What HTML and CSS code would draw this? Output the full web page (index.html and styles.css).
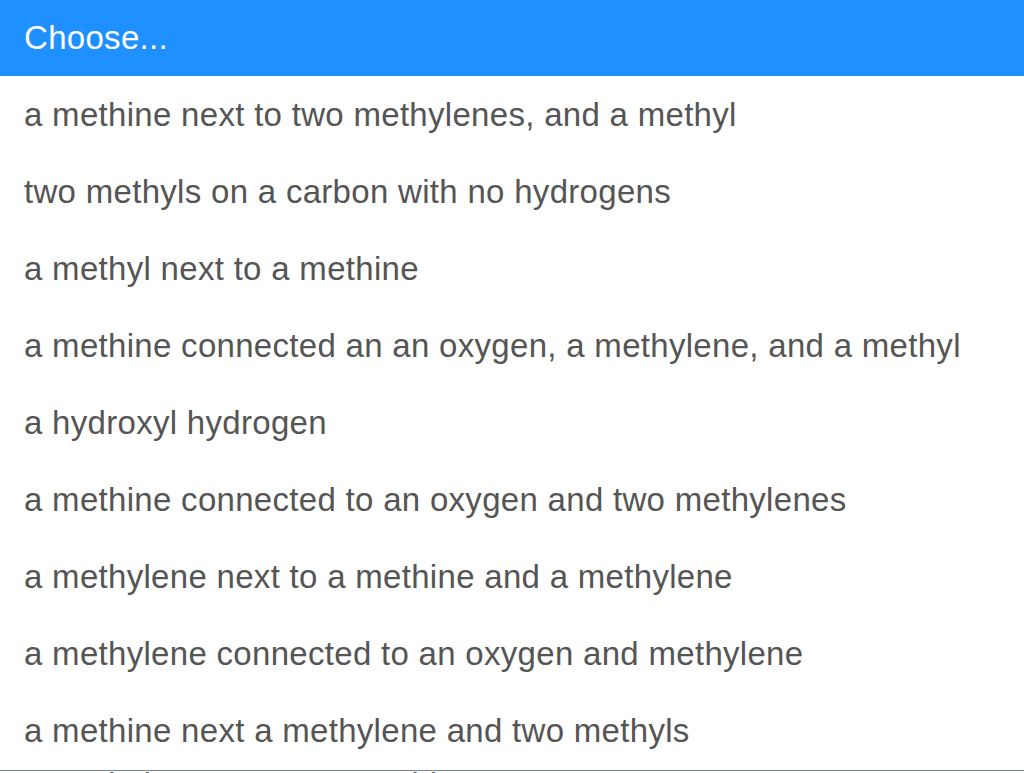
FILE: index.html
```html
<!DOCTYPE html>
<html lang="en">
<head>
<meta charset="utf-8">
<title>Choose</title>
<link rel="stylesheet" href="styles.css">
</head>
<body>
<div class="picker">
  <div class="header">Choose...</div>
  <ul class="options">
    <li class="option">a methine next to two methylenes, and a methyl</li>
    <li class="option">two methyls on a carbon with no hydrogens</li>
    <li class="option">a methyl next to a methine</li>
    <li class="option">a methine connected an an oxygen, a methylene, and a methyl</li>
    <li class="option">a hydroxyl hydrogen</li>
    <li class="option">a methine connected to an oxygen and two methylenes</li>
    <li class="option">a methylene next to a methine and a methylene</li>
    <li class="option">a methylene connected to an oxygen and methylene</li>
    <li class="option">a methine next a methylene and two methyls</li>
  </ul>
  <div class="rest">a methylene next to a methine</div>
</div>
</body>
</html>
```
FILE: styles.css
```css
html, body {
  margin: 0;
  padding: 0;
  background: #ffffff;
}
body {
  font-family: "Liberation Sans", Arial, Helvetica, sans-serif;
  overflow: hidden;
  height: 773px;
}
.picker {
  width: 1024px;
}
.header {
  height: 76px;
  background: #1e90ff;
  color: #ffffff;
  font-size: 33px;
  letter-spacing: 0.3px;
  padding-left: 24px;
  display: flex;
  align-items: center;
}
.options {
  list-style: none;
  margin: 0;
  padding: 0;
}
.option {
  height: 77px;
  padding-left: 24px;
  display: flex;
  align-items: center;
  font-size: 33px;
  letter-spacing: 0.3px;
  color: #555555;
}
.rest {
  margin-top: 1px;
  border-top: 1px solid #73849b;
  padding-left: 24px;
  font-size: 33px;
  letter-spacing: 0.3px;
  line-height: 28px;
  color: #555555;
}
```
